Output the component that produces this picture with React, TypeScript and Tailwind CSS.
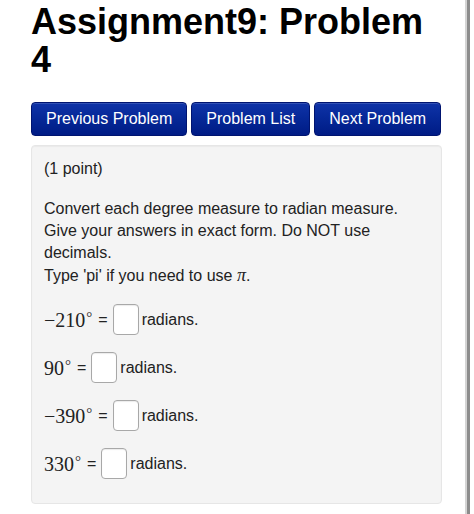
const sans = { fontFamily: '"Liberation Sans", Arial, Helvetica, sans-serif' };
const serif = { fontFamily: '"Liberation Serif", "Times New Roman", serif' };

function Deg({ value }: { value: string }) {
  return (
    <span className="flex items-center">
      <span className="text-[20px] leading-[24px]" style={serif}>
        {value}
      </span>
      <span className="self-start mt-[2px] ml-[1px] text-[15px] leading-none" style={serif}>
        °
      </span>
    </span>
  );
}

function AnswerRow({ value }: { value: string }) {
  return (
    <div className="flex items-center h-[31px]">
      <Deg value={value} />
      <span className="ml-[6px] text-[16px]">=</span>
      <span className="ml-[5px] w-[26px] h-[31px] bg-white border border-[#a8a8a8] rounded-[4px] shadow-[inset_0_1px_1px_rgba(0,0,0,0.08)]" />
      <span className="ml-[3px] text-[16px]">radians.</span>
    </div>
  );
}

function NavButton({ label }: { label: string }) {
  return (
    <button className="h-[34px] px-[14px] rounded-[4px] border border-[#001470] bg-gradient-to-b from-[#0f33a8] to-[#001b85] text-white text-[16px] leading-[22px] shadow-[inset_0_1px_0_rgba(255,255,255,0.15)]">
      {label}
    </button>
  );
}

export default function App() {
  return (
    <div className="flex h-[514px] bg-white text-[#222]" style={sans}>
      <div className="w-[465px] pl-[31px]">
        <div className="w-[411px]">
          <h1 className="pt-[3px] text-[36px] leading-[38px] font-bold text-black">
            Assignment9: Problem 4
          </h1>

          <div className="mt-[23px] flex gap-[4px]">
            <NavButton label="Previous Problem" />
            <NavButton label="Problem List" />
            <NavButton label="Next Problem" />
          </div>

          <div className="mt-[9px] h-[359px] bg-[#f4f4f4] border border-[#e6e6e6] rounded-[4px] shadow-[inset_0_1px_1px_rgba(0,0,0,0.04)] px-3 pt-3 text-[16px] leading-[22px]">
            <p>(1 point)</p>
            <p className="mt-[18px]">
              Convert each degree measure to radian measure.
              <br />
              Give your answers in exact form. Do NOT use decimals.
              <br />
              Type 'pi' if you need to use{' '}
              <span className="italic text-[18px]" style={serif}>
                π
              </span>
              .
            </p>

            <div className="mt-[17px] flex flex-col gap-[17px]">
              <AnswerRow value="−210" />
              <AnswerRow value="90" />
              <AnswerRow value="−390" />
              <AnswerRow value="330" />
            </div>
          </div>
        </div>
      </div>
      <div className="w-[2px] bg-[#d4d4d4]" />
      <div className="w-[3px] bg-[#8c8c8c]" />
    </div>
  );
}
